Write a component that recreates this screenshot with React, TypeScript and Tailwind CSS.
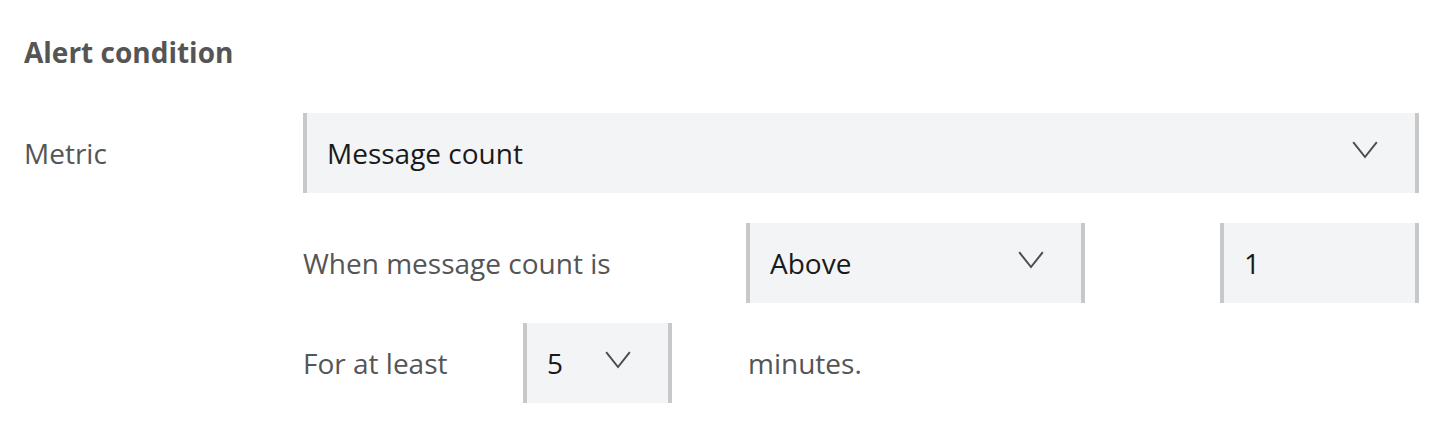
import React from 'react';

const Chevron: React.FC = () => (
  <svg width="26" height="18" viewBox="0 0 26 18" fill="none" className="shrink-0 mb-[6px]">
    <path d="M1.2 1.2 L13 16 L24.8 1.2" stroke="#4d4d4d" strokeWidth="2" />
  </svg>
);

const Select: React.FC<{ value: string; className: string }> = ({ value, className }) => (
  <div
    className={`h-[80px] bg-[#f3f4f5] border-x-4 border-[#c8c8c8] flex items-center justify-between pl-5 pr-[37px] text-[#1a1a1a] ${className}`}
  >
    <span>{value}</span>
    <Chevron />
  </div>
);

const App: React.FC = () => {
  return (
    <div className="w-[1432px] h-[446px] bg-white pl-6 pt-[33px] font-['Open_Sans',sans-serif] text-[28px] leading-[38px] text-[#555]">
      <h2 className="font-bold">Alert condition</h2>

      <div className="mt-[42px] flex items-center">
        <div className="w-[279px]">Metric</div>
        <Select value="Message count" className="w-[1116px]" />
      </div>

      <div className="ml-[279px] mt-[30px] flex items-center">
        <span className="w-[443px]">When message count is</span>
        <Select value="Above" className="w-[339px]" />
        <div className="ml-[135px] w-[199px] h-[80px] bg-[#f3f4f5] border-x-4 border-[#c8c8c8] flex items-center pl-5 text-[#1a1a1a]">
          1
        </div>
      </div>

      <div className="ml-[279px] mt-[20px] flex items-center">
        <span className="w-[220px]">For at least</span>
        <Select value="5" className="w-[149px]" />
        <span className="ml-[76px]">minutes.</span>
      </div>
    </div>
  );
};

export default App;
